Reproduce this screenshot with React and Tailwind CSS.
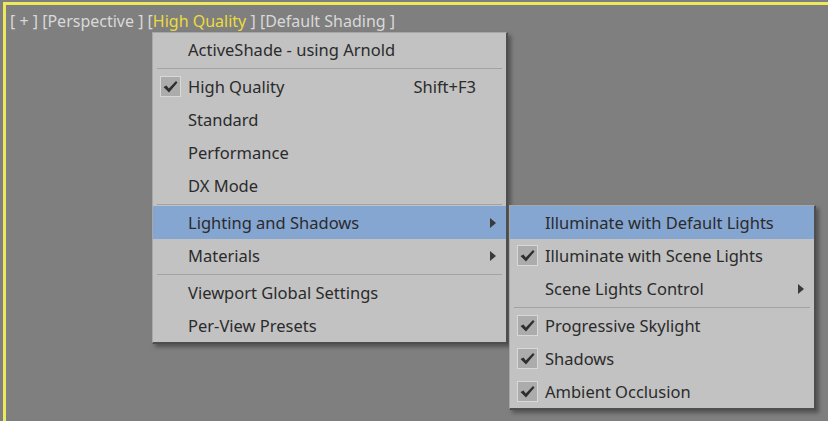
const font = { fontFamily: '"Noto Sans", "Open Sans", sans-serif' }

function Check() {
  return (
    <div className="w-[21px] h-[21px] border border-[#d8d8d8] bg-[#acacac] flex items-center justify-center">
      <svg width="15" height="13" viewBox="0 0 15 13">
        <path d="M0.5 7 L3.5 5.5 L5.8 8.5 L13 1 L14.5 2.5 L6 12.5 Z" fill="#2e2e2e" />
      </svg>
    </div>
  )
}

function Arrow() {
  return (
    <svg width="6" height="10" viewBox="0 0 6 10">
      <path d="M0 0 L6 5 L0 10 Z" fill="#3a3a3a" />
    </svg>
  )
}

function Item({ label, checked, shortcut, sub, active }) {
  return (
    <div className={`h-[33px] flex items-center ${active ? 'bg-[#86a6d2]' : ''}`}>
      <div className="w-[35px] pl-[7px] shrink-0 flex items-center">{checked && <Check />}</div>
      <div className="flex-1 pt-[2px] text-[#2b2b2b] text-[16.5px] leading-none whitespace-nowrap">{label}</div>
      {shortcut && <div className="pt-[2px] pr-[30px] text-[#2b2b2b] text-[16.5px] leading-none">{shortcut}</div>}
      {sub && <div className="pr-[10px]"><Arrow /></div>}
    </div>
  )
}

function Sep() {
  return (
    <div className="h-[4px] flex items-center px-[4px]">
      <div className="h-px w-full bg-[#a2a2a2]" />
    </div>
  )
}

export default function App() {
  return (
    <div className="w-[828px] h-[421px] bg-[#7f7f7f] relative overflow-hidden" style={font}>
      <div className="absolute left-[3px] top-[2px] right-0 bottom-0 border-t-[3px] border-l-[3px] border-[#ecea5c]">
        <div className="pl-[4px] pt-[8px] text-[16px] leading-none text-[#d9d9d9] whitespace-nowrap">
          [ + ] [Perspective ] [<span className="text-[#ecdc3c]">High Quality</span> ] [Default Shading ]
        </div>
      </div>

      <div className="absolute left-[152px] top-[32px] w-[356px] bg-[#c2c2c2] border-t border-l border-[#a8a8a8] border-r-2 border-b-2 border-r-[#4e4e4e] border-b-[#4e4e4e] shadow-[3px_3px_4px_rgba(0,0,0,0.35)]">
        <Item label="ActiveShade - using Arnold" />
        <Sep />
        <Item label="High Quality" checked shortcut="Shift+F3" />
        <Item label="Standard" />
        <Item label="Performance" />
        <Item label="DX Mode" />
        <Sep />
        <Item label="Lighting and Shadows" sub active />
        <Item label="Materials" sub />
        <Sep />
        <Item label="Viewport Global Settings" />
        <Item label="Per-View Presets" />
      </div>

      <div className="absolute left-[509px] top-[205px] w-[307px] bg-[#c2c2c2] border-t border-l border-[#a8a8a8] border-r-2 border-b-2 border-r-[#4e4e4e] border-b-[#4e4e4e] shadow-[3px_3px_4px_rgba(0,0,0,0.35)]">
        <Item label="Illuminate with Default Lights" active />
        <Item label="Illuminate with Scene Lights" checked />
        <Item label="Scene Lights Control" sub />
        <Sep />
        <Item label="Progressive Skylight" checked />
        <Item label="Shadows" checked />
        <Item label="Ambient Occlusion" checked />
      </div>
    </div>
  )
}
